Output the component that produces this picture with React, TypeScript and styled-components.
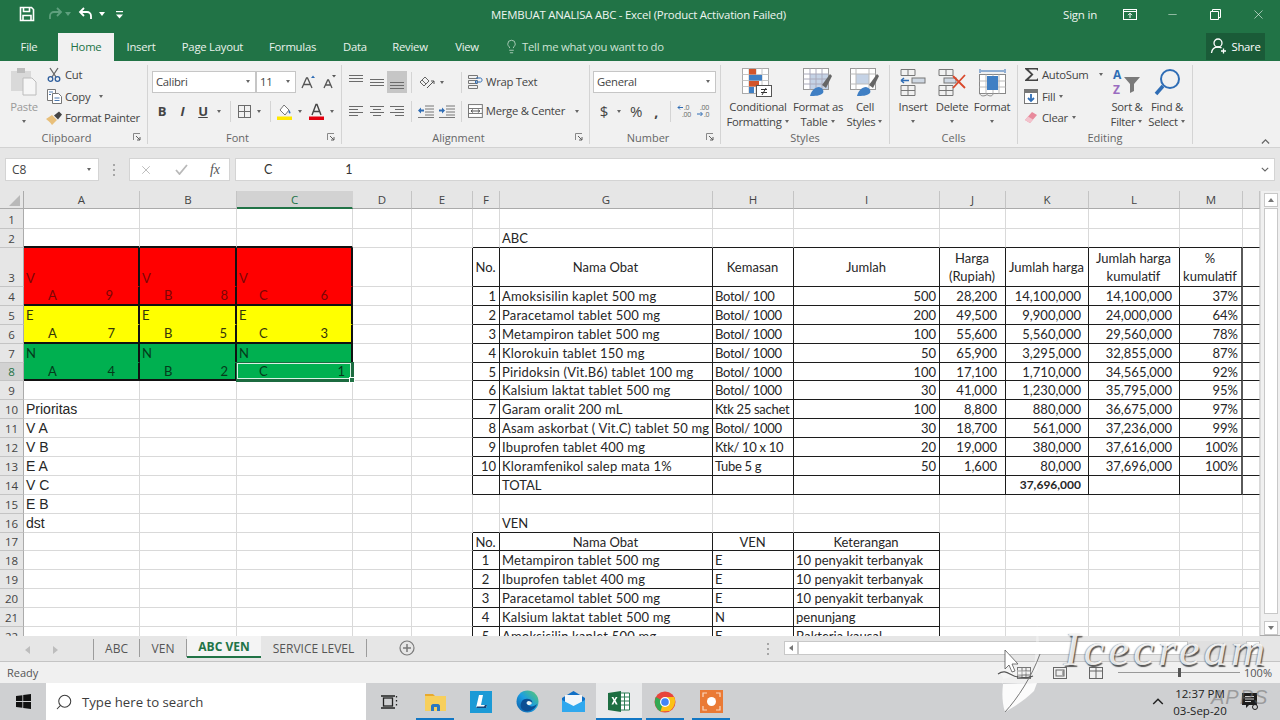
import React from "react";
import styled, { createGlobalStyle } from "styled-components";
import { Lightbulb, Search, X, Minus } from "lucide-react";

const uiFont = `"Open Sans", "Noto Sans", sans-serif`;
const cellFont = `Lato, "Open Sans", sans-serif`;

const GlobalStyle = createGlobalStyle`
  html, body { margin: 0; padding: 0; background: #fff; }
  * { box-sizing: border-box; }
  body { font-family: ${uiFont}; }
`;

/* ---------- frame ---------- */

const Page = styled.div`
  position: relative;
  width: 1280px;
  height: 720px;
  overflow: hidden;
  display: flex;
  flex-direction: column;
  background: #e6e6e6;
  font-size: 11.5px;
  color: #444;
`;

const TitleBar = styled.div`
  height: 30px;
  padding-bottom: 2px;
  background: #217346;
  color: #eef5f0;
  display: grid;
  grid-template-columns: 1fr auto 1fr;
  align-items: center;
  letter-spacing: -0.22px;
`;

const Qat = styled.div`
  display: flex;
  align-items: center;
  padding-left: 19px;
`;

const Title = styled.div`
  font-size: 11.4px;
  padding-right: 3px;
`;

const WindowControls = styled.div`
  display: flex;
  align-items: center;
  justify-content: flex-end;
`;

const SignIn = styled.span`
  font-size: 11.5px;
  margin-right: 11px;
`;

const WinBtn = styled.span`
  width: 43px;
  display: flex;
  justify-content: center;
  align-items: center;
`;

const TabBar = styled.div`
  height: 31px;
  background: #217346;
  color: #e9f2ec;
  display: flex;
  align-items: flex-end;
  letter-spacing: -0.25px;
`;

const Tab = styled.div<{ $w: number; $active?: boolean }>`
  width: ${(p) => p.$w}px;
  height: 28px;
  padding-bottom: 2px;
  display: flex;
  align-items: center;
  justify-content: center;
  font-size: 11.3px;
  background: ${(p) => (p.$active ? "#f1f1f1" : "transparent")};
  color: ${(p) => (p.$active ? "#217346" : "inherit")};
`;

const TellMe = styled.div`
  height: 28px;
  padding: 0 0 2px 8px;
  display: flex;
  align-items: center;
  gap: 3px;
  font-size: 11.3px;
  color: #cfe3d6;
  flex: 1;
`;

const ShareBtn = styled.div`
  width: 59px;
  height: 27px;
  margin-right: 15px;
  margin-bottom: 1px;
  padding-bottom: 1px;
  background: #1a5b38;
  color: #fff;
  display: flex;
  align-items: center;
  justify-content: center;
  gap: 3px;
  font-size: 11.3px;
`;

/* ---------- ribbon ---------- */

const Ribbon = styled.div`
  height: 87px;
  background: #f1f1f1;
  border-bottom: 1px solid #d2d2d2;
  padding-top: 4px;
  display: flex;
  letter-spacing: -0.28px;
`;

const Group = styled.div<{ $w: number }>`
  width: ${(p) => p.$w}px;
  height: 79px;
  border-right: 1px solid #d4d4d4;
  display: flex;
  flex-direction: column;
`;

const GroupBody = styled.div<{ $pl?: number; $stack?: boolean }>`
  height: 67px;
  display: flex;
  flex-direction: ${(p) => (p.$stack ? "column" : "row")};
  padding-left: ${(p) => p.$pl ?? 0}px;
  gap: ${(p) => (p.$stack ? "7px" : "0")};
  padding-top: ${(p) => (p.$stack ? "6px" : "0")};
`;

const GroupFoot = styled.div`
  height: 14px;
  display: flex;
  align-items: center;
  color: #666;
  font-size: 11px;
  letter-spacing: 0;
`;

const GroupName = styled.span`
  flex: 1;
  text-align: center;
`;

const Launcher = styled.span`
  width: 14px;
  display: flex;
  align-items: center;
`;

const Collapse = styled.div`
  flex: 1;
  display: flex;
  justify-content: flex-end;
  align-items: flex-end;
  padding: 0 10px 3px 0;
`;

const Row = styled.div`
  height: 22px;
  display: flex;
  align-items: center;
`;

const Tool = styled.span<{ $w: number; $on?: boolean; $size?: number; $strong?: boolean; $it?: boolean }>`
  width: ${(p) => p.$w}px;
  height: 22px;
  flex: none;
  display: flex;
  align-items: center;
  justify-content: center;
  background: ${(p) => (p.$on ? "#c6c6c6" : "transparent")};
  font-size: ${(p) => p.$size ?? 12}px;
  font-weight: ${(p) => (p.$strong ? 700 : 400)};
  font-style: ${(p) => (p.$it ? "italic" : "normal")};
`;

const Drop = styled.span<{ $w?: number }>`
  width: ${(p) => p.$w ?? 8}px;
  flex: none;
  display: flex;
  justify-content: center;
  &::after {
    content: "";
    border-left: 2.5px solid transparent;
    border-right: 2.5px solid transparent;
    border-top: 3px solid #666;
  }
`;

const Sep = styled.span<{ $l: number; $r: number }>`
  width: 1px;
  height: 21px;
  flex: none;
  background: #d4d4d4;
  margin-left: ${(p) => p.$l}px;
  margin-right: ${(p) => p.$r}px;
`;

const Combo = styled.div<{ $w: number }>`
  width: ${(p) => p.$w}px;
  height: 22px;
  flex: none;
  background: #fff;
  border: 1px solid #c6c6c6;
  display: flex;
  align-items: center;
  justify-content: space-between;
  padding: 0 3px 1px;
  font-size: 11.3px;
`;

const BigBtn = styled.div<{ $w: number; $ml?: number; $dim?: boolean }>`
  width: ${(p) => p.$w}px;
  margin-left: ${(p) => p.$ml ?? 0}px;
  flex: none;
  display: flex;
  flex-direction: column;
  align-items: center;
  padding-top: 3px;
  color: ${(p) => (p.$dim ? "#9a9a9a" : "inherit")};
  white-space: nowrap;
`;

const BigIcon = styled.div`
  height: 28px;
  display: flex;
  align-items: center;
  justify-content: center;
`;

const BigLabel = styled.div`
  margin-top: 3px;
  line-height: 15px;
  height: 30px;
  font-size: 11.3px;
  display: flex;
  flex-direction: column;
  align-items: center;
`;

const LabelLine = styled.span`
  display: flex;
  align-items: center;
  gap: 2px;
  height: 15px;
`;

const SmallStack = styled.div<{ $ml: number; $w?: number }>`
  margin-left: ${(p) => p.$ml}px;
  width: ${(p) => (p.$w ? `${p.$w}px` : "auto")};
  flex: none;
  display: flex;
  flex-direction: column;
`;

const SmallBtn = styled.div<{ $gap?: number }>`
  height: 21.5px;
  padding-bottom: 2px;
  display: flex;
  align-items: center;
  gap: ${(p) => p.$gap ?? 3}px;
  font-size: 11.3px;
  white-space: nowrap;
`;

const IconSlot = styled.span<{ $w: number }>`
  width: ${(p) => p.$w}px;
  flex: none;
  display: flex;
  justify-content: center;
`;

const WideLabel = styled.span<{ $ml: number }>`
  margin-left: ${(p) => p.$ml}px;
  padding-bottom: 1px;
  font-size: 11.3px;
  white-space: nowrap;
`;

/* ---------- formula bar ---------- */

const FormulaBar = styled.div`
  height: 34px;
  padding: 10px 5px 0;
  display: flex;
  align-items: flex-start;
  background: #e6e6e6;
`;

const NameBox = styled.div`
  width: 94px;
  height: 23px;
  background: #fff;
  border: 1px solid #d4d4d4;
  display: flex;
  align-items: center;
  justify-content: space-between;
  padding: 0 5px 0 6px;
  font-size: 12px;
`;

const Dots = styled.div`
  width: 30px;
  height: 23px;
  display: flex;
  align-items: center;
  justify-content: center;
`;

const FxBox = styled.div`
  width: 101px;
  height: 23px;
  background: #fff;
  border: 1px solid #d4d4d4;
  display: flex;
  align-items: center;
  justify-content: space-between;
  padding: 0 9px;
  color: #b9b9b9;
`;

const FxLabel = styled.span`
  font-family: "Liberation Serif", serif;
  font-style: italic;
  font-size: 14px;
  color: #555;
`;

const FormulaInput = styled.div`
  flex: 1;
  height: 23px;
  margin-left: 5px;
  background: #fff;
  border: 1px solid #d4d4d4;
  display: flex;
  align-items: center;
  padding-left: 28px;
  padding-right: 5px;
  font-family: ${cellFont};
  font-size: 12.5px;
  color: #333;
`;

const FormulaGap = styled.span`
  width: 73px;
`;

const FormulaEnd = styled.span`
  margin-left: auto;
  display: flex;
`;

const BarGap = styled.div`
  height: 9px;
`;

/* ---------- sheet ---------- */

const SheetArea = styled.div`
  height: 445px;
  display: flex;
  background: #fff;
  border-bottom: 1px solid #ababab;
`;

const colWidths = [24, 116, 97, 116, 59, 61, 27, 213, 81, 146, 66, 83, 91, 63, 17];
const colNames = ["A", "B", "C", "D", "E", "F", "G", "H", "I", "J", "K", "L", "M", ""];
const rowHeights = [18, 20, 19, 39, ...Array.from({ length: 20 }, () => 18.9)];

const Grid = styled.div`
  width: 1260px;
  height: 445px;
  overflow: hidden;
  display: grid;
  grid-template-columns: ${colWidths.map((w) => `${w}px`).join(" ")};
  grid-template-rows: ${rowHeights.map((h) => `${h}px`).join(" ")};
  background: #fff;
`;

const Corner = styled.div`
  background: #e6e6e6;
  border-right: 1px solid #ababab;
  border-bottom: 1px solid #ababab;
  display: flex;
  align-items: flex-end;
  justify-content: flex-end;
  padding: 0 3px 2px 0;
`;

const ColHead = styled.div<{ $on?: boolean }>`
  background: ${(p) => (p.$on ? "#d2d2d2" : "#e6e6e6")};
  color: ${(p) => (p.$on ? "#217346" : "#444")};
  border-right: 1px solid ${(p) => (p.$on ? "#d2d2d2" : "#c4c4c4")};
  border-bottom: ${(p) => (p.$on ? "2px solid #217346" : "1px solid #ababab")};
  display: flex;
  align-items: center;
  justify-content: center;
  font-size: 11.5px;
`;

const RowHead = styled.div<{ $on?: boolean }>`
  background: ${(p) => (p.$on ? "#d2d2d2" : "#e6e6e6")};
  color: ${(p) => (p.$on ? "#217346" : "#444")};
  border-right: 1px solid #ababab;
  border-bottom: 1px solid #c4c4c4;
  display: flex;
  align-items: flex-end;
  justify-content: center;
  font-size: 11.5px;
  line-height: 17px;
`;

const Cell = styled.div<{
  $align: string;
  $fill?: string;
  $ink?: string;
  $right: string;
  $bottom: string;
  $pr: number;
  $pl: number;
  $track?: number;
  $bold?: boolean;
  $arial?: boolean;
  $end?: boolean;
  $sel?: boolean;
}>`
  position: relative;
  display: flex;
  align-items: ${(p) => (p.$end ? "flex-end" : "center")};
  justify-content: ${(p) => p.$align};
  padding: 0 ${(p) => p.$pr}px 0 ${(p) => p.$pl}px;
  background: ${(p) => p.$fill ?? "#fff"};
  color: ${(p) => p.$ink ?? "#262626"};
  border-right: ${(p) => p.$right};
  border-bottom: ${(p) => p.$bottom};
  font-family: ${(p) => (p.$arial ? `"Liberation Sans", Arial, sans-serif` : cellFont)};
  font-size: ${(p) => (p.$arial ? "14px" : p.$bold ? "12px" : "13px")};
  font-weight: ${(p) => (p.$bold ? 700 : 400)};
  letter-spacing: ${(p) => p.$track ?? 0}px;
  white-space: nowrap;
  ${(p) =>
    p.$sel &&
    "border-color: #1c6b40; outline: 1px solid #1c6b40; box-shadow: inset 0 0 0 1px #d9f2e4; z-index: 2;"}
`;

const Stacked = styled.span`
  display: block;
  text-align: center;
  line-height: 18px;
`;

const Split = styled.span`
  flex: 1;
  display: flex;
  justify-content: space-between;
`;

const FillHandle = styled.span`
  position: absolute;
  right: -4px;
  bottom: -4px;
  width: 6px;
  height: 6px;
  background: #217346;
  border: 1px solid #fff;
`;

const VScroll = styled.div`
  width: 20px;
  background: #f0f0f0;
  border-left: 1px solid #dcdcdc;
  display: flex;
  flex-direction: column;
  align-items: center;
  padding-top: 2px;
`;

const ScrollArrow = styled.div`
  width: 14px;
  height: 14px;
  background: #fff;
  border: 1px solid #c8c8c8;
  display: flex;
  align-items: center;
  justify-content: center;
  flex: none;
`;

const VThumb = styled.div`
  width: 14px;
  flex: 1;
  margin: 1px 0 7px;
  background: #fff;
  border: 1px solid #c8c8c8;
`;

/* ---------- sheet tabs + status ---------- */

const TabsRow = styled.div`
  height: 26px;
  background: #e6e6e6;
  display: flex;
  align-items: flex-start;
  border-bottom: 1px solid #c4c4c4;
`;

const TabNav = styled.div`
  width: 94px;
  height: 21px;
  display: flex;
  align-items: center;
  padding-left: 25px;
  gap: 23px;
  border-right: 1px solid #9c9c9c;
  margin-top: 3px;
`;

const SheetTab = styled.div<{ $w: number; $active?: boolean }>`
  width: ${(p) => p.$w}px;
  height: ${(p) => (p.$active ? "22px" : "18px")};
  margin-top: ${(p) => (p.$active ? "0" : "3px")};
  display: flex;
  align-items: center;
  justify-content: center;
  font-size: 12px;
  color: ${(p) => (p.$active ? "#217346" : "#555")};
  font-weight: ${(p) => (p.$active ? 700 : 400)};
  background: ${(p) => (p.$active ? "#f4f4f4" : "transparent")};
  border-right: ${(p) => (p.$active ? "none" : "1px solid #9c9c9c")};
  border-bottom: ${(p) => (p.$active ? "2px solid #217346" : "none")};
`;

const AddSheet = styled.div`
  margin: 4px 0 0 32px;
  display: flex;
`;

const TabsDots = styled.div`
  margin: 3px 8px 0 345px;
  width: 16px;
  height: 20px;
  display: flex;
  align-items: center;
  justify-content: center;
`;

const HScroll = styled.div`
  margin-top: 5px;
  width: 476px;
  height: 14px;
  display: flex;
  background: #e0e0e0;
`;

const HThumb = styled.div`
  width: 393px;
  margin: 0 58px 0 0;
  background: #fff;
  border: 1px solid #c8c8c8;
`;

const StatusBar = styled.div`
  height: 21px;
  background: #f0f0f0;
  display: flex;
  align-items: center;
  padding: 0 8px 0 7px;
  font-size: 11px;
  color: #555;
`;

const StatusSpacer = styled.div`
  flex: 1;
`;

const ViewBtn = styled.span`
  width: 36px;
  display: flex;
  justify-content: center;
`;

const ZoomTrack = styled.div`
  width: 122px;
  height: 1px;
  margin: 0 4px 0 4px;
  background: #999;
  display: flex;
  justify-content: center;
`;

const ZoomKnob = styled.span`
  width: 3px;
  height: 9px;
  margin-top: -4px;
  background: #555;
`;

/* ---------- taskbar ---------- */

const Taskbar = styled.div`
  height: 37px;
  background: #cfd0d2;
  display: flex;
  align-items: stretch;
`;

const StartBtn = styled.div`
  width: 46px;
  display: flex;
  align-items: center;
  justify-content: center;
`;

const SearchBox = styled.div`
  width: 320px;
  background: #fff;
  display: flex;
  align-items: center;
  gap: 9px;
  padding-left: 9px;
  font-size: 13.2px;
  color: #3c3c3c;
`;

const TaskItem = styled.div<{ $open?: boolean; $active?: boolean }>`
  width: 46px;
  display: flex;
  align-items: center;
  justify-content: center;
  background: ${(p) => (p.$active ? "#e9eaeb" : "transparent")};
  position: relative;
  &::after {
    content: "";
    display: ${(p) => (p.$open ? "block" : "none")};
    position: absolute;
    left: ${(p) => (p.$active ? "0" : "4px")};
    right: ${(p) => (p.$active ? "0" : "4px")};
    bottom: 0;
    height: 2px;
    background: #1277c4;
  }
`;

const Tray = styled.div`
  flex: 1;
  display: flex;
  align-items: center;
  justify-content: flex-end;
  color: #222;
`;

const TrayChevron = styled.span`
  display: flex;
  margin-right: 4px;
`;

const Clock = styled.div`
  width: 64px;
  text-align: center;
  font-size: 11.5px;
  line-height: 17px;
  margin-right: 10px;
`;

const Notify = styled.span`
  display: flex;
  margin-right: 22px;
`;

/* ---------- watermark (sits on top of everything) ---------- */

const MarkArt = styled.svg`
  position: absolute;
  left: 0;
  top: 0;
  pointer-events: none;
`;

const MarkName = styled.div`
  position: absolute;
  left: 1064px;
  top: 622px;
  font-family: "Liberation Serif", serif;
  font-style: italic;
  font-size: 47px;
  letter-spacing: 4px;
  color: rgba(255, 255, 255, 0.85);
  text-shadow: 1px 2px 1px rgba(60, 60, 60, 0.85), -1px 0 1px rgba(90, 90, 90, 0.5);
`;

const MarkApps = styled.div`
  position: absolute;
  left: 1211px;
  top: 686px;
  font-family: "Liberation Sans", sans-serif;
  font-style: italic;
  font-size: 20px;
  letter-spacing: 1px;
  color: rgba(110, 110, 110, 0.55);
`;

/* ---------- icons ---------- */

const SaveIcon = () => (
  <svg width="16" height="16" viewBox="0 0 16 16" fill="none" stroke="#fff" strokeWidth="1.6">
    <path d="M1.5 1.5h11l2 2v11h-13z" />
    <path d="M4.5 1.5v4h6v-4M4 14.5v-5h8v5" />
  </svg>
);

const ArrowBack = ({ flip, color }: { flip?: boolean; color: string }) => (
  <svg width="16" height="14" viewBox="0 0 16 14" fill="none" stroke={color} strokeWidth="1.8" style={flip ? { transform: "scaleX(-1)" } : undefined}>
    <path d="M6 1L2 5l4 4" />
    <path d="M2 5h7a4 4 0 0 1 4 4v3" />
  </svg>
);

const QatDrop = ({ color }: { color: string }) => (
  <svg width="6" height="4" viewBox="0 0 6 4"><path d="M0 0h6L3 4z" fill={color} /></svg>
);

const QatMore = () => (
  <svg width="7" height="9" viewBox="0 0 7 9" fill="#fff">
    <rect y="1" width="7" height="1.2" />
    <path d="M0 4.5h7L3.5 8.5z" />
  </svg>
);

const RibbonDisplay = () => (
  <svg width="14" height="11" viewBox="0 0 14 11" fill="none" stroke="#fff">
    <rect x=".5" y=".5" width="13" height="10" />
    <path d="M.5 2.5h13M7 9V4.5M5 6.2l2-2 2 2" />
  </svg>
);

const RestoreIcon = () => (
  <svg width="11" height="11" viewBox="0 0 11 11" fill="none" stroke="#fff">
    <path d="M.5 2.5h8v8h-8zM2.5 2.5v-2h8v8h-2" />
  </svg>
);

const ShareIcon = () => (
  <svg width="18" height="16" viewBox="0 0 18 16" fill="none" stroke="#fff" strokeWidth="1.3">
    <circle cx="8" cy="5" r="4" />
    <path d="M1.5 15c.5-4 3-6 6.5-6 1.4 0 2.6.3 3.5 1M11 13h5M13.5 10.5v5" />
  </svg>
);

const PasteIcon = () => (
  <svg width="28" height="28" viewBox="0 0 28 28">
    <path d="M1 3h20v20H1z" fill="#d9d9d9" />
    <rect x="7" y="0" width="8" height="5" fill="#bdbdbd" />
    <path d="M13 10h9l4 4v13H13z" fill="#f6f6f6" stroke="#bcbcbc" />
  </svg>
);

const ScissorsIcon = () => (
  <svg width="14" height="15" viewBox="0 0 14 15" fill="none" strokeWidth="1.3">
    <path d="M3 1l6 9M11 1L5 10" stroke="#666" />
    <circle cx="3.5" cy="12" r="2.3" stroke="#2f5f9e" />
    <circle cx="10.5" cy="12" r="2.3" stroke="#2f5f9e" />
  </svg>
);

const CopyIcon = () => (
  <svg width="15" height="15" viewBox="0 0 15 15" fill="#fff" stroke="#777">
    <path d="M.5 .5h8v11h-8z" />
    <path d="M5.5 4.5h6l3 3v7h-9z" />
    <path d="M2 3h4M2 5.5h2M7.5 9h5M7.5 11.5h5" stroke="#4a78b0" />
  </svg>
);

const BrushIcon = () => (
  <svg width="16" height="14" viewBox="0 0 16 14">
    <path d="M0 8l6-4 5 5-5 5C4 11 2 9.5 0 8z" fill="#e8bf7a" />
    <path d="M8 4.5l5-4 3 3-4 5z" fill="#444" />
  </svg>
);

const TinyLauncher = () => (
  <svg width="8" height="8" viewBox="0 0 8 8" fill="none" stroke="#888">
    <path d="M.5 7V.5H7" />
    <path d="M3 3l4 4M4 7h3V4" stroke="#5d5d5d" />
  </svg>
);

const Lines = ({ rows }: { rows: [number, number, number][] }) => (
  <svg width="14" height="14" viewBox="0 0 14 14" stroke="#6b6b6b">
    {rows.map(([x1, x2, y], i) => (
      <line key={i} x1={x1} x2={x2} y1={y + 0.5} y2={y + 0.5} />
    ))}
  </svg>
);

const left: [number, number, number][] = [[0, 14, 2], [0, 9, 5], [0, 14, 8], [0, 9, 11]];
const center: [number, number, number][] = [[0, 14, 2], [3, 11, 5], [0, 14, 8], [3, 11, 11]];
const right: [number, number, number][] = [[0, 14, 2], [5, 14, 5], [0, 14, 8], [5, 14, 11]];

const IndentIcon = ({ rev }: { rev?: boolean }) => (
  <svg width="16" height="13" viewBox="0 0 16 13">
    <path d="M7 1h9M7 4h9M7 7h9M7 10h9M0 12.5h16" stroke="#777" fill="none" />
    <path d={rev ? "M0 5.5l3-3v2h3v2H3v2z" : "M6 5.5l-3-3v2H0v2h3v2z"} fill="#2f6db5" />
  </svg>
);

const OrientIcon = () => (
  <svg width="16" height="14" viewBox="0 0 16 14" fill="none" stroke="#666">
    <path d="M1 7l5-5 4 4-5 5zM3 5l4 4" />
    <path d="M8 13l7-7M15 6h-3M15 6v3" stroke="#555" />
  </svg>
);

const WrapIcon = () => (
  <svg width="15" height="14" viewBox="0 0 15 14" fill="none" stroke="#777">
    <path d="M.5 .5h9v3h-9zM.5 5.5h9v3h-9zM.5 10.5h9v3h-9z" />
    <path d="M8 3h4.5c2 0 2 4 0 4H7M9 5L7 7l2 2" stroke="#2f6db5" />
  </svg>
);

const MergeIcon = () => (
  <svg width="15" height="14" viewBox="0 0 15 14" fill="#fff" stroke="#777">
    <rect x=".5" y=".5" width="14" height="13" />
    <path d="M.5 4.5h14M.5 9.5h14" />
    <path d="M3 7h9M3 7l2-1.5M3 7l2 1.5M12 7l-2-1.5M12 7l-2 1.5" stroke="#555" />
  </svg>
);

const BorderIcon = () => (
  <svg width="13" height="13" viewBox="0 0 13 13" fill="none" stroke="#6b6b6b">
    <rect x=".5" y=".5" width="12" height="12" />
    <path d="M6.5 .5v12M.5 6.5h12" />
  </svg>
);

const FillIcon = () => (
  <svg width="16" height="17" viewBox="0 0 16 17">
    <path d="M3 7l4-5 5 5-4 5z" fill="#fff" stroke="#777" />
    <path d="M12 7c1.5 1.5 2 3 1 3.5S11 9 12 7z" fill="#2f6db5" />
    <rect y="13.5" width="15" height="3.5" fill="#ffe800" />
  </svg>
);

const ColorA = () => (
  <svg width="15" height="17" viewBox="0 0 15 17">
    <path d="M3 12L7 1.5h1L12 12M4.6 8.5h5.800" fill="none" stroke="#444" strokeWidth="1.4" />
    <rect y="13.5" width="15" height="3.5" fill="#e2000f" />
  </svg>
);

const GrowA = ({ up }: { up?: boolean }) => (
  <svg width="15" height="14" viewBox="0 0 15 14">
    <path d={up ? "M1 13L5.5 3h1L11 13M2.8 9.5h6.4" : "M2 13L5.700 5h.8L10 13M3.5 10h5"} fill="none" stroke="#555" strokeWidth="1.3" />
    <path d={up ? "M10 3l2-2.5L14 3z" : "M10 0h4l-2 2.5z"} fill={up ? "#2f6db5" : "#555"} />
  </svg>
);

const DecIcon = ({ more }: { more?: boolean }) => (
  <svg width="18" height="14" viewBox="0 0 18 14" fontFamily="Open Sans, sans-serif" fontSize="7" fill="#666">
    <text x={more ? 4 : 7} y="6">{more ? ".00" : ".0"}</text>
    <text x={more ? 8 : 5} y="13">{more ? ".0" : ".00"}</text>
    <path d={more ? "M0 10h5M3.5 8l2 2-2 2" : "M1 3.5h5M3 1.5l-2 2 2 2"} stroke="#2f6db5" fill="none" transform={more ? "translate(1 0)" : undefined} />
  </svg>
);

const CondFormat = () => (
  <svg width="32" height="29" viewBox="0 0 32 29">
    <rect x=".5" y=".5" width="26" height="25" fill="#fff" stroke="#aaa" />
    <path d="M7 .5v25M14 .5v25M20 .5v25M.5 6.5h26M.5 12.5h26M.5 18.5h26" stroke="#c4c4c4" />
    <rect x="7" y="1" width="7" height="5.5" fill="#d2552b" />
    <rect x="7" y="7" width="13" height="5.5" fill="#3f7fc4" />
    <rect x="7" y="13" width="10" height="5.5" fill="#d2552b" />
    <rect x="7" y="19" width="5" height="6" fill="#3f7fc4" />
    <rect x="14.5" y="17.5" width="15" height="11" fill="#fff" stroke="#555" />
    <path d="M19 21.5h6M19 24.5h6M24 20l-4 7" stroke="#333" fill="none" />
  </svg>
);

const TableBrush = ({ cell }: { cell?: boolean }) => (
  <svg width="30" height="29" viewBox="0 0 30 29">
    <rect x=".5" y=".5" width="25" height="21" fill="#fff" stroke="#999" />
    <rect x={cell ? 6 : 7} y={6} width={cell ? 13 : 18} height={cell ? 10 : 15} fill="#c5d3e6" />
    {cell ? (
      <path d="M6 .5v21M19 .5v21M.5 6h25M.5 16h25" stroke="#bbb" />
    ) : (
      <path d="M7 .5v21M13 .5v21M19 .5v21M.5 6h25M.5 11h25M.5 16h25" stroke="#aab" />
    )}
    <path d="M19 17l8-11 2 2-6 12z" fill="#666" />
    <path d="M7 28c1-5 5-9 9-9 4 1 5 4 4 6-3 3-8 3-13 3z" fill="#3f7fc4" />
  </svg>
);

const InsertCells = () => (
  <svg width="26" height="27" viewBox="0 0 26 27" fill="none" stroke="#777">
    <path d="M1 .5h14v6H1zM8 .5v6M1 16.5h14v10H1zM1 21.5h14M8 16.5v10" />
    <rect x="12" y="9" width="13" height="5" fill="#cfd8e3" stroke="#777" />
    <path d="M1 11.5h8M1 11.5l3-2.5M1 11.5l3 2.5" stroke="#2f6db5" strokeWidth="1.5" />
  </svg>
);

const DeleteCells = () => (
  <svg width="28" height="27" viewBox="0 0 28 27" fill="none" stroke="#777">
    <path d="M1 .5h14v6H1zM8 .5v6M1 16.5h14v10H1zM1 21.5h14M8 16.5v10" />
    <rect x="6" y="9" width="12" height="5" fill="#cfd8e3" stroke="#777" />
    <path d="M15 7l12 12M27 6L15 19" stroke="#d9482b" strokeWidth="1.8" />
  </svg>
);

const FormatCells = () => (
  <svg width="27" height="29" viewBox="0 0 27 29" fill="none" stroke="#888">
    <path d="M1 1v4M26 1v4M2 3h23" stroke="#2f6db5" />
    <rect x=".5" y="6.5" width="26" height="19" fill="#fff" />
    <path d="M7 6.5v19M14 6.5v19M20 6.5v19M.5 13h26M.5 19h26" stroke="#bbb" />
    <rect x="8" y="8" width="11" height="14" fill="#3f7fc4" stroke="none" />
    <path d="M1 25.5c0 3 5 3 7 1 2 2 6 2 6-1" />
  </svg>
);

const SigmaIcon = () => (
  <svg width="15" height="15" viewBox="0 0 15 15"><path d="M1 1h13v3L12.5 2.5H4.5l5 5-5 5h8L14 11v3H1v-1l6-5.5L1 2z" fill="#444" /></svg>
);

const FillDown = () => (
  <svg width="14" height="15" viewBox="0 0 14 15">
    <rect x=".5" y=".5" width="13" height="14" fill="#fff" stroke="#777" />
    <rect x="1" y="1" width="12" height="3" fill="#777" />
    <path d="M7 5v7M4 9l3 3 3-3" stroke="#2f6db5" strokeWidth="1.8" fill="none" />
  </svg>
);

const EraserIcon = () => (
  <svg width="13" height="13" viewBox="0 0 13 13">
    <path d="M0 9l7-8 5 3-7 8z" fill="#e88a9c" />
    <path d="M0 9l3-3.5 5 3L5 12z" fill="#f3c3cd" />
  </svg>
);

const SortIcon = () => (
  <svg width="30" height="28" viewBox="0 0 30 28">
    <text x="1" y="11" fontFamily="Open Sans, sans-serif" fontWeight="700" fontSize="12" fill="#2f6db5">A</text>
    <text x="1" y="26" fontFamily="Open Sans, sans-serif" fontWeight="700" fontSize="12" fill="#9a6cc0">Z</text>
    <path d="M12 9h16l-6 7v7l-4 2v-9z" fill="#7a7a7a" />
  </svg>
);

const FindIcon = () => (
  <svg width="27" height="28" viewBox="0 0 27 28" fill="none" stroke="#2f6db5">
    <circle cx="16" cy="11" r="9" strokeWidth="2" />
    <path d="M9 18l-7 8" strokeWidth="3.5" />
  </svg>
);

const NavArrow = ({ flip }: { flip?: boolean }) => (
  <svg width="5" height="8" viewBox="0 0 5 8"><path d={flip ? "M0 0l5 4-5 4z" : "M5 0L0 4l5 4z"} fill="#bdbdbd" /></svg>
);

const PlusCircle = () => (
  <svg width="16" height="16" viewBox="0 0 16 16" fill="none" stroke="#7a7a7a" strokeWidth="1.2">
    <circle cx="8" cy="8" r="7" />
    <path d="M8 4v8M4 8h8" strokeWidth="1.5" />
  </svg>
);

const VDots = () => (
  <svg width="3" height="12" viewBox="0 0 3 12" fill="#a6a6a6">
    <rect y="0" width="2" height="2" /><rect y="5" width="2" height="2" /><rect y="10" width="2" height="2" />
  </svg>
);

const Tri = ({ d }: { d: string }) => (
  <svg width="8" height="6" viewBox="0 0 8 6"><path d={d} fill="#777" /></svg>
);

const NormalView = () => (
  <svg width="14" height="12" viewBox="0 0 14 12" fill="none" stroke="#777">
    <rect x=".5" y=".5" width="13" height="11" /><path d="M5 .5v11M9 .5v11M.5 4h13M.5 8h13" />
  </svg>
);

const LayoutView = () => (
  <svg width="14" height="12" viewBox="0 0 14 12" fill="none" stroke="#666">
    <rect x=".5" y=".5" width="13" height="11" /><rect x="3" y="3" width="8" height="6" /><path d="M9 5h2M9 7h2" />
  </svg>
);

const BreakView = () => (
  <svg width="14" height="12" viewBox="0 0 14 12" fill="none" stroke="#666">
    <rect x=".5" y=".5" width="13" height="11" /><path d="M7 .5v11M.5 4h13" />
  </svg>
);

const WindowsLogo = () => (
  <svg width="15" height="15" viewBox="0 0 15 15" fill="#111">
    <path d="M0 2.1L6.4 1.2V7.1H0zM7.2 1.1L15 0V7.1H7.2zM0 7.9H6.4V13.8L0 12.9zM7.2 7.9H15V15L7.2 13.9z" />
  </svg>
);

const TaskView = () => (
  <svg width="17" height="16" viewBox="0 0 17 16" fill="none" stroke="#222" strokeWidth="1.3">
    <rect x="2.5" y="4" width="9" height="8" />
    <path d="M0 2h14M0 14h14M15.5 2v1.5M15.5 6v1.5M15.5 10v1.5" />
  </svg>
);

const FolderIcon = () => (
  <svg width="21" height="18" viewBox="0 0 21 18">
    <path d="M0 1h8l2 2H0z" fill="#e8a92e" />
    <rect y="3" width="21" height="15" fill="#f7cf5c" />
    <path d="M6 18v-5c0-1 1-2 2-2h5c1 0 2 1 2 2v5h-3v-4H9v4z" fill="#2a78c2" />
  </svg>
);

const LApp = () => (
  <svg width="22" height="22" viewBox="0 0 22 22">
    <rect width="22" height="22" fill="#1c9ad6" />
    <path d="M9 4h4L11 14h6l-1 3H6z" fill="#fff" />
    <path d="M6 17h10l1-3-2 0-1 1.5H7z" fill="#14477e" />
  </svg>
);

const EdgeIcon = () => (
  <svg width="23" height="23" viewBox="0 0 23 23">
    <defs>
      <linearGradient id="edgeGrad" x1="0" y1="1" x2="1" y2="0">
        <stop offset="0" stopColor="#0c59a4" />
        <stop offset=".5" stopColor="#1b9de2" />
        <stop offset="1" stopColor="#5ecb6a" />
      </linearGradient>
    </defs>
    <circle cx="11.5" cy="11.5" r="11" fill="url(#edgeGrad)" />
    <path d="M6 11c2-3 8-3 10 0 1 2-1 4-4 4 2 2 6 2 9-1-2 6-9 9-14 6-3-2-3-6-1-9z" fill="#0c4f94" />
    <path d="M12 15c-2-1-2-3 0-4 3 0 4 2 4 2-1 2-2 2-4 2z" fill="#e9f4f5" />
  </svg>
);

const MailIcon = () => (
  <svg width="23" height="21" viewBox="0 0 23 21">
    <path d="M11.5 0L23 7v14H0V7z" fill="#0f6fc6" />
    <path d="M3 4h17v8l-8.5 4L3 12z" fill="#f2f6fa" />
    <path d="M0 9l11.5 6L23 9v12H0z" fill="#2fa8ee" />
  </svg>
);

const ExcelIcon = () => (
  <svg width="22" height="21" viewBox="0 0 22 21">
    <path d="M12 2h9.5v17H12z" fill="#fff" stroke="#2d7d55" />
    <path d="M12 6h9M12 10h9M12 14h9M16.5 2v17" stroke="#2d7d55" />
    <path d="M0 2l13-2v21L0 19z" fill="#1e6e42" />
    <path d="M3.5 6l2 3.5-2 4h1.8l1.200-2.600 1.300 2.600h1.900L7.500 9.500 9.500 6H7.700L6.500 8.300 5.400 6z" fill="#fff" />
  </svg>
);

const ChromeIcon = () => (
  <svg width="22" height="22" viewBox="0 0 22 22">
    <circle cx="11" cy="11" r="10.5" fill="#e8453c" />
    <path d="M11 11L1.8 6C-.5 11 1.5 18 6.5 20.5z" fill="#34a853" />
    <path d="M11 6h9.300c1.800 4.500 .5 10-4.500 14L6.500 20.500z" fill="#fbc116" />
    <circle cx="11" cy="11" r="5" fill="#fff" />
    <circle cx="11" cy="11" r="3.8" fill="#4285f4" />
  </svg>
);

const RecorderIcon = () => (
  <svg width="23" height="23" viewBox="0 0 23 23">
    <rect width="23" height="23" fill="#ea7a35" />
    <circle cx="11.5" cy="11.5" r="4.5" fill="#fff" />
    <path d="M3 7V3h4M16 3h4v4M20 16v4h-4M7 20H3v-4" fill="none" stroke="#fbd8c0" strokeWidth="1.2" />
  </svg>
);

const NotifyIcon = () => (
  <svg width="16" height="17" viewBox="0 0 16 17">
    <path d="M0 0h15v12H7l-3 3v-3H0z" fill="#1d1d1d" />
    <path d="M3 3.5h9M3 6h9M3 8.5h6" stroke="#d0d0d0" />
    <circle cx="13" cy="14" r="2.5" fill="none" stroke="#1d1d1d" />
  </svg>
);

const Chevron = ({ up, size = 10, color = "#666", weight = 1.4 }: { up?: boolean; size?: number; color?: string; weight?: number }) => (
  <svg width={size} height={size * 0.6} viewBox="0 0 10 6" fill="none" stroke={color} strokeWidth={weight}>
    <path d={up ? "M1 5l4-4 4 4" : "M1 1l4 4 4-4"} />
  </svg>
);

/* ---------- sheet data ---------- */

type Spec = {
  t?: React.ReactNode;
  align?: string;
  pr?: number;
  pl?: number;
  track?: number;
  bold?: boolean;
  arial?: boolean;
  end?: boolean;
  fill?: string;
  ink?: string;
};

const cols = "ABCDEFGHIJKLMN";
const at = (col: string, row: number) => `${col}${row}`;
const specs: Record<string, Spec> = {};
const mid = "center";
const end = "flex-end";

const tableHead: [string, React.ReactNode][] = [
  ["F", "No."],
  ["G", "Nama Obat"],
  ["H", "Kemasan"],
  ["I", "Jumlah"],
  ["J", <Stacked>Harga<br />(Rupiah)</Stacked>],
  ["K", "Jumlah harga"],
  ["L", <Stacked>Jumlah harga<br />kumulatif</Stacked>],
  ["M", <Stacked>%<br />kumulatif</Stacked>],
];
tableHead.forEach(([c, t]) => (specs[at(c, 3)] = { t, align: mid }));

const abcRows = [
  ["Amoksisilin kaplet 500 mg", "Botol/ 100", "500", "28,200", "14,100,000", "14,100,000", "37%"],
  ["Paracetamol tablet 500 mg", "Botol/ 1000", "200", "49,500", "9,900,000", "24,000,000", "64%"],
  ["Metampiron tablet 500 mg", "Botol/ 1000", "100", "55,600", "5,560,000", "29,560,000", "78%"],
  ["Klorokuin tablet 150 mg", "Botol/ 1000", "50", "65,900", "3,295,000", "32,855,000", "87%"],
  ["Piridoksin (Vit.B6) tablet 100 mg", "Botol/ 1000", "100", "17,100", "1,710,000", "34,565,000", "92%"],
  ["Kalsium laktat tablet 500 mg", "Botol/ 1000", "30", "41,000", "1,230,000", "35,795,000", "95%"],
  ["Garam oralit 200 mL", "Ktk 25 sachet", "100", "8,800", "880,000", "36,675,000", "97%"],
  ["Asam askorbat ( Vit.C) tablet 50 mg", "Botol/ 1000", "30", "18,700", "561,000", "37,236,000", "99%"],
  ["Ibuprofen tablet 400 mg", "Ktk/ 10 x 10", "20", "19,000", "380,000", "37,616,000", "100%"],
  ["Kloramfenikol salep mata 1%", "Tube 5 g", "50", "1,600", "80,000", "37,696,000", "100%"],
];
abcRows.forEach((v, i) => {
  const r = 4 + i;
  specs[at("F", r)] = { t: i + 1, align: end };
  specs[at("G", r)] = { t: v[0], track: 0.2 };
  specs[at("H", r)] = { t: v[1], track: -0.3 };
  specs[at("I", r)] = { t: v[2], align: end };
  specs[at("J", r)] = { t: v[3], align: end, pr: 8 };
  specs[at("K", r)] = { t: v[4], align: end, pr: 7 };
  specs[at("L", r)] = { t: v[5], align: end, pr: 7 };
  specs[at("M", r)] = { t: v[6], align: end };
});
specs[at("G", 2)] = { t: "ABC" };
specs[at("G", 14)] = { t: "TOTAL" };
specs[at("K", 14)] = { t: "37,696,000", align: end, pr: 7, bold: true };
specs[at("G", 16)] = { t: "VEN" };

(
  [
    ["F", "No."],
    ["G", "Nama Obat"],
    ["H", "VEN"],
    ["I", "Keterangan"],
  ] as [string, string][]
).forEach(([c, t]) => (specs[at(c, 17)] = { t, align: mid }));

const venRows = [
  ["Metampiron tablet 500 mg", "E", "10 penyakit terbanyak"],
  ["Ibuprofen tablet 400 mg", "E", "10 penyakit terbanyak"],
  ["Paracetamol tablet 500 mg", "E", "10 penyakit terbanyak"],
  ["Kalsium laktat tablet 500 mg", "N", "penunjang"],
  ["Amoksisilin kaplet 500 mg", "E", "Bakteria kausal"],
];
venRows.forEach((v, i) => {
  const r = 18 + i;
  specs[at("F", r)] = { t: i + 1, align: mid };
  specs[at("G", r)] = { t: v[0], track: 0.2 };
  specs[at("H", r)] = { t: v[1] };
  specs[at("I", r)] = { t: v[2] };
});

["Prioritas", "V A", "V B", "E A", "V C", "E B", "dst"].forEach((t, i) => {
  specs[at("A", 10 + i)] = { t, arial: true };
});

const bands = [
  { top: 3, tag: "V", fill: "#ff0000", ink: "#7a0606", nums: ["9", "8", "6"], pads: [25, 7, 23] },
  { top: 5, tag: "E", fill: "#ffff00", ink: "#34340a", nums: ["7", "5", "3"], pads: [23, 8, 23] },
  { top: 7, tag: "N", fill: "#00b050", ink: "#053a1b", nums: ["4", "2", "1"], pads: [23, 7, 6] },
];
bands.forEach(({ top, tag, fill, ink, nums, pads }) => {
  ["A", "B", "C"].forEach((c, i) => {
    specs[at(c, top)] = { t: tag, fill, ink, end: top === 3 };
    specs[at(c, top + 1)] = {
      t: (
        <Split>
          <span>{c}</span>
          <span>{nums[i]}</span>
        </Split>
      ),
      fill,
      ink,
      pl: c === "C" ? 22 : 24,
      pr: pads[i],
    };
  });
});

const inAbc = (r: number, c: string) => r >= 3 && r <= 14 && "FGHIJKLM".includes(c);
const inVen = (r: number, c: string) => r >= 17 && r <= 22 && "FGHI".includes(c);
const boxed = (r: number, c: string) => inAbc(r, c) || inVen(r, c);
const inMatrix = (r: number, c: string) => r >= 3 && r <= 8 && "ABC".includes(c);

const line = "#d9d9d9";
const ink = "1px solid #1c1c1c";

const rightEdge = (r: number, i: number) => {
  const c = cols[i];
  const next = cols[i + 1];
  if (c === "M" && inAbc(r, c)) return "2px solid #5a5a5a";
  if (inMatrix(r, c)) return "2px solid #111";
  if (next && inMatrix(r, next)) return "2px solid #111";
  if (boxed(r, c) || (next && boxed(r, next))) return ink;
  return `1px solid ${line}`;
};

const bottomEdge = (r: number, c: string) => {
  if (inMatrix(r, c)) return r % 2 === 0 ? "2px solid #111" : "1px solid transparent";
  if (inMatrix(r + 1, c)) return "2px solid #111";
  if (c === "N" && r >= 2 && r <= 14) return ink;
  if (boxed(r, c) || boxed(r + 1, c)) return ink;
  return `1px solid ${line}`;
};

const SheetGrid = () => (
  <Grid>
    <Corner>
      <svg width="11" height="11" viewBox="0 0 11 11"><path d="M11 0v11H0z" fill="#b9b9b9" /></svg>
    </Corner>
    {colNames.map((name, i) => (
      <ColHead key={i} $on={name === "C"}>{name}</ColHead>
    ))}
    {Array.from({ length: 22 }, (_, idx) => idx + 1).map((r) => (
      <React.Fragment key={r}>
        <RowHead $on={r === 8}>{r}</RowHead>
        {cols.split("").map((c, i) => {
          const s = specs[at(c, r)] ?? {};
          const sel = c === "C" && r === 8;
          return (
            <Cell
              key={c}
              $align={s.align ?? "flex-start"}
              $fill={s.fill}
              $ink={s.ink}
              $right={rightEdge(r, i)}
              $bottom={bottomEdge(r, c)}
              $pr={s.pr ?? 3}
              $pl={s.pl ?? 2}
              $track={s.track}
              $bold={s.bold}
              $arial={s.arial}
              $end={s.end}
              $sel={sel}
            >
              {s.t}
              {sel && <FillHandle />}
            </Cell>
          );
        })}
      </React.Fragment>
    ))}
  </Grid>
);

/* ---------- ribbon groups ---------- */

const Foot = ({ name, launcher }: { name: string; launcher?: boolean }) => (
  <GroupFoot>
    <GroupName>{name}</GroupName>
    {launcher && <Launcher><TinyLauncher /></Launcher>}
  </GroupFoot>
);

const Big = ({ icon, a, b, w, ml, dim }: { icon: React.ReactNode; a: string; b: string; w: number; ml?: number; dim?: boolean }) => (
  <BigBtn $w={w} $ml={ml} $dim={dim}>
    <BigIcon>{icon}</BigIcon>
    <BigLabel>
      <LabelLine>{a}</LabelLine>
      <LabelLine>{b}{b && " "}<Drop $w={6} /></LabelLine>
    </BigLabel>
  </BigBtn>
);

const RibbonBar = () => (
  <Ribbon>
    <Group $w={148}>
      <GroupBody>
        <Big icon={<PasteIcon />} a="Paste" b="" w={32} ml={8} dim />
        <SmallStack $ml={6}>
          <SmallBtn><IconSlot $w={16}><ScissorsIcon /></IconSlot><span>Cut</span></SmallBtn>
          <SmallBtn><IconSlot $w={16}><CopyIcon /></IconSlot><span>Copy</span><Drop $w={16} /></SmallBtn>
          <SmallBtn><IconSlot $w={16}><BrushIcon /></IconSlot><span>Format Painter</span></SmallBtn>
        </SmallStack>
      </GroupBody>
      <Foot name="Clipboard" launcher />
    </Group>

    <Group $w={194}>
      <GroupBody $stack $pl={4}>
        <Row>
          <Combo $w={104}>Calibri<Drop /></Combo>
          <Combo $w={40}>11<Drop /></Combo>
          <Tool $w={24}><GrowA up /></Tool>
          <Tool $w={19}><GrowA /></Tool>
        </Row>
        <Row>
          <Tool $w={20} $strong $size={13}>B</Tool>
          <Tool $w={21} $it $strong $size={13}>I</Tool>
          <Tool $w={20} $strong $size={13}><u>U</u></Tool>
          <Drop $w={11} />
          <Sep $l={6} $r={4} />
          <Tool $w={18}><BorderIcon /></Tool>
          <Drop $w={12} />
          <Sep $l={5} $r={4} />
          <Tool $w={20}><FillIcon /></Tool>
          <Drop $w={10} />
          <Tool $w={23}><ColorA /></Tool>
          <Drop $w={8} />
        </Row>
      </GroupBody>
      <Foot name="Font" launcher />
    </Group>

    <Group $w={248}>
      <GroupBody $stack $pl={3}>
        <Row>
          <Tool $w={21}><Lines rows={[[0, 14, 0], [0, 14, 3], [0, 14, 6]]} /></Tool>
          <Tool $w={21}><Lines rows={[[0, 14, 4], [0, 14, 7], [0, 14, 10]]} /></Tool>
          <Tool $w={20} $on><Lines rows={[[0, 14, 7], [0, 14, 10], [0, 14, 13]]} /></Tool>
          <Sep $l={4} $r={4} />
          <Tool $w={22}><OrientIcon /></Tool>
          <Drop $w={7} />
          <Sep $l={16} $r={6} />
          <WrapIcon />
          <WideLabel $ml={3}>Wrap Text</WideLabel>
        </Row>
        <Row>
          <Tool $w={21}><Lines rows={left} /></Tool>
          <Tool $w={21}><Lines rows={center} /></Tool>
          <Tool $w={20}><Lines rows={right} /></Tool>
          <Sep $l={4} $r={6} />
          <Tool $w={16}><IndentIcon rev /></Tool>
          <Tool $w={26}><IndentIcon /></Tool>
          <Sep $l={1} $r={6} />
          <MergeIcon />
          <WideLabel $ml={3}>Merge &amp; Center</WideLabel>
          <Drop $w={24} />
        </Row>
      </GroupBody>
      <Foot name="Alignment" launcher />
    </Group>

    <Group $w={131}>
      <GroupBody $stack $pl={3}>
        <Row>
          <Combo $w={123}>General<Drop /></Combo>
        </Row>
        <Row>
          <Tool $w={22} $size={15}>$</Tool>
          <Drop $w={8} />
          <Tool $w={26} $size={15}>%</Tool>
          <Tool $w={14} $size={14} $strong>,</Tool>
          <Sep $l={7} $r={5} />
          <Tool $w={19}><DecIcon /></Tool>
          <Tool $w={20}><DecIcon more /></Tool>
        </Row>
      </GroupBody>
      <Foot name="Number" launcher />
    </Group>

    <Group $w={169}>
      <GroupBody $pl={6}>
        <Big icon={<CondFormat />} a="Conditional" b="Formatting" w={62} />
        <Big icon={<TableBrush />} a="Format as" b="Table" w={58} />
        <Big icon={<TableBrush cell />} a="Cell" b="Styles" w={36} />
      </GroupBody>
      <Foot name="Styles" />
    </Group>

    <Group $w={128}>
      <GroupBody $pl={4}>
        <Big icon={<InsertCells />} a="Insert" b="" w={38} />
        <Big icon={<DeleteCells />} a="Delete" b="" w={40} />
        <Big icon={<FormatCells />} a="Format" b="" w={40} />
      </GroupBody>
      <Foot name="Cells" />
    </Group>

    <Group $w={175}>
      <GroupBody>
        <SmallStack $ml={5} $w={83}>
          <SmallBtn><IconSlot $w={16}><SigmaIcon /></IconSlot><span>AutoSum</span><Drop $w={18} /></SmallBtn>
          <SmallBtn><IconSlot $w={16}><FillDown /></IconSlot><span>Fill</span><Drop $w={6} /></SmallBtn>
          <SmallBtn><IconSlot $w={16}><EraserIcon /></IconSlot><span>Clear</span><Drop $w={6} /></SmallBtn>
        </SmallStack>
        <Big icon={<SortIcon />} a="Sort &" b="Filter" w={42} />
        <Big icon={<FindIcon />} a="Find &" b="Select" w={38} />
      </GroupBody>
      <Foot name="Editing" />
    </Group>

    <Collapse><Chevron up size={9} /></Collapse>
  </Ribbon>
);

export default function App() {
  return (
    <Page>
      <GlobalStyle />
      <TitleBar>
        <Qat>
          <SaveIcon />
          <IconSlot $w={12} />
          <IconSlot $w={16}><ArrowBack flip color="#5fa07e" /></IconSlot>
          <IconSlot $w={10}><QatDrop color="#5fa07e" /></IconSlot>
          <IconSlot $w={26}><ArrowBack color="#fff" /></IconSlot>
          <IconSlot $w={6}><QatDrop color="#fff" /></IconSlot>
          <IconSlot $w={28}><QatMore /></IconSlot>
        </Qat>
        <Title>MEMBUAT ANALISA ABC - Excel (Product Activation Failed)</Title>
        <WindowControls>
          <SignIn>Sign in</SignIn>
          <WinBtn><RibbonDisplay /></WinBtn>
          <WinBtn><Minus size={13} strokeWidth={1} /></WinBtn>
          <WinBtn><RestoreIcon /></WinBtn>
          <WinBtn><X size={15} strokeWidth={1} /></WinBtn>
        </WindowControls>
      </TitleBar>

      <TabBar>
        <Tab $w={58}>File</Tab>
        <Tab $w={56} $active>Home</Tab>
        <Tab $w={54}>Insert</Tab>
        <Tab $w={89}>Page Layout</Tab>
        <Tab $w={71}>Formulas</Tab>
        <Tab $w={54}>Data</Tab>
        <Tab $w={56}>Review</Tab>
        <Tab $w={58}>View</Tab>
        <TellMe>
          <Lightbulb size={15} strokeWidth={1.2} />
          Tell me what you want to do
        </TellMe>
        <ShareBtn><ShareIcon />Share</ShareBtn>
      </TabBar>

      <RibbonBar />

      <FormulaBar>
        <NameBox>C8<Drop /></NameBox>
        <Dots><VDots /></Dots>
        <FxBox>
          <X size={14} strokeWidth={1.6} />
          <svg width="13" height="11" viewBox="0 0 13 11" fill="none" stroke="currentColor" strokeWidth="1.8"><path d="M1 6l3.5 4L12 1" /></svg>
          <FxLabel>fx</FxLabel>
        </FxBox>
        <FormulaInput>
          C<FormulaGap />1
          <FormulaEnd><Chevron size={8} /></FormulaEnd>
        </FormulaInput>
      </FormulaBar>
      <BarGap />

      <SheetArea>
        <SheetGrid />
        <VScroll>
          <ScrollArrow><Tri d="M4 1l3 4H1z" /></ScrollArrow>
          <VThumb />
          <ScrollArrow><Tri d="M1 1h6L4 5z" /></ScrollArrow>
        </VScroll>
      </SheetArea>

      <TabsRow>
        <TabNav><NavArrow /><NavArrow flip /></TabNav>
        <SheetTab $w={46}>ABC</SheetTab>
        <SheetTab $w={47}>VEN</SheetTab>
        <SheetTab $w={74} $active>ABC VEN</SheetTab>
        <SheetTab $w={106}>SERVICE LEVEL</SheetTab>
        <AddSheet><PlusCircle /></AddSheet>
        <TabsDots><VDots /></TabsDots>
        <HScroll>
          <ScrollArrow><Tri d="M6 0v6L2 3z" /></ScrollArrow>
          <HThumb />
          <ScrollArrow><Tri d="M2 0v6l4-3z" /></ScrollArrow>
        </HScroll>
      </TabsRow>

      <StatusBar>
        <span>Ready</span>
        <StatusSpacer />
        <ViewBtn><NormalView /></ViewBtn>
        <ViewBtn><LayoutView /></ViewBtn>
        <ViewBtn><BreakView /></ViewBtn>
        <ZoomTrack><ZoomKnob /></ZoomTrack>
        <span>100%</span>
      </StatusBar>

      <Taskbar>
        <StartBtn><WindowsLogo /></StartBtn>
        <SearchBox>
          <Search size={18} strokeWidth={1.4} style={{ transform: "scaleX(-1)" }} />
          Type here to search
        </SearchBox>
        <TaskItem><TaskView /></TaskItem>
        <TaskItem $open><FolderIcon /></TaskItem>
        <TaskItem><LApp /></TaskItem>
        <TaskItem><EdgeIcon /></TaskItem>
        <TaskItem><MailIcon /></TaskItem>
        <TaskItem $open $active><ExcelIcon /></TaskItem>
        <TaskItem $open><ChromeIcon /></TaskItem>
        <TaskItem $open><RecorderIcon /></TaskItem>
        <Tray>
          <TrayChevron><Chevron up size={12} color="#222" weight={1.2} /></TrayChevron>
          <Clock>12:37 PM<br />03-Sep-20</Clock>
          <Notify><NotifyIcon /></Notify>
        </Tray>
      </Taskbar>

      <MarkArt width="1280" height="720" viewBox="0 0 1280 720">
        <path d="M1037 625c3 14 2 30 0 46l-34 8c-2 6 0 8 0 0 0-4-3-6-6-5 3-6 7-7 12-5l25 3z" fill="#fff" opacity=".35" />
        <path d="M1003 684l34-1-3 8c-8 8-20 16-29 21-3-9-3-19-2-28z" fill="#fff" opacity=".9" />
        <path d="M1040 654c-8 22-22 44-35 58" fill="none" stroke="#777" strokeWidth="1" />
        <path d="M998 674c8-6 12 2 20 3s10 1 15-1" fill="none" stroke="#555" strokeWidth="1.2" />
        <path d="M1005 650v19l4-4 3 7 3-1-3-7h6z" fill="#fff" stroke="#555" strokeWidth=".8" />
      </MarkArt>
      <MarkName>Icecream</MarkName>
      <MarkApps>APPS</MarkApps>
    </Page>
  );
}
